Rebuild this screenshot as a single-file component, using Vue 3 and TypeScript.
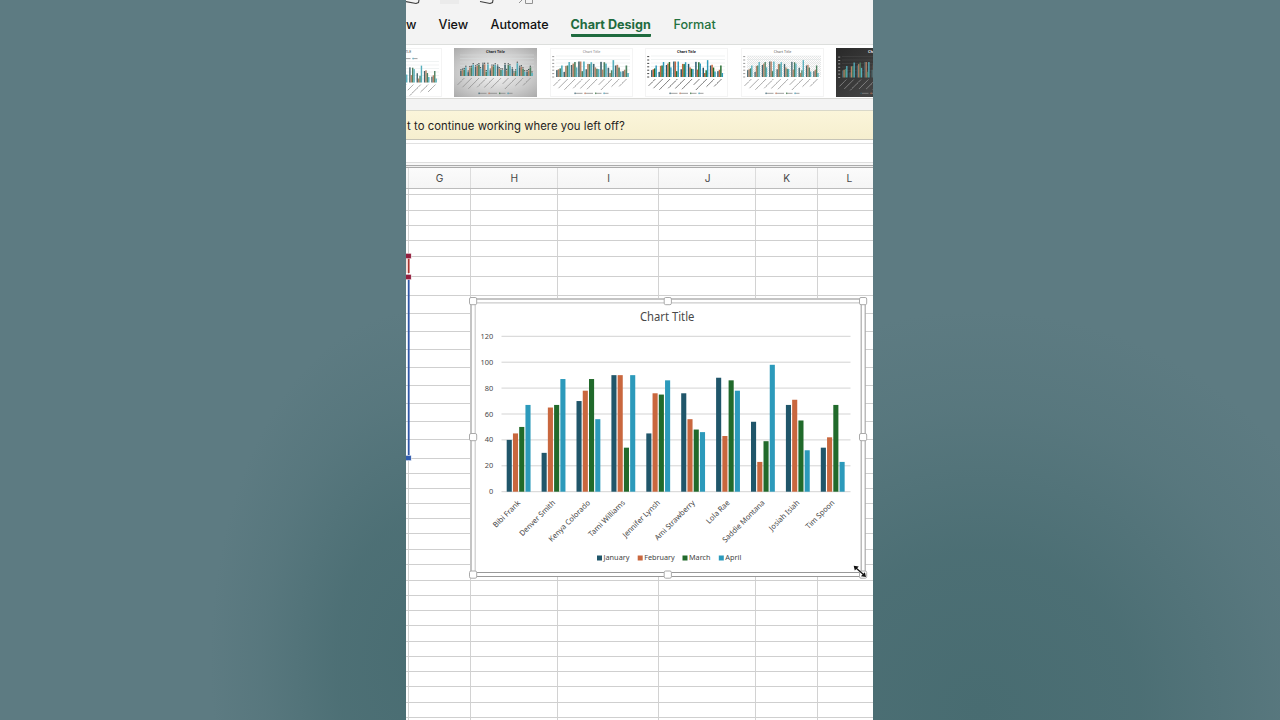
<script setup lang="ts">
interface Person { name: string; values: number[]; length: number }
interface Thumb { kind: string; title: string; base: number; titleColor: string; weight: number; bar: number; scale: number }

const people: Person[] = [
  { name: 'Bibi Frank', values: [40, 45, 50, 67], length: 35 },
  { name: 'Denver Smith', values: [30, 65, 67, 87], length: 47 },
  { name: 'Kenya Colorado', values: [70, 78, 87, 56], length: 55 },
  { name: 'Tami Williams', values: [90, 90, 34, 90], length: 48 },
  { name: 'Jennifer Lynsh', values: [45, 76, 75, 86], length: 49 },
  { name: 'Ami Strawberry', values: [76, 56, 48, 46], length: 53 },
  { name: 'Lola Rae', values: [88, 43, 86, 78], length: 29.5 },
  { name: 'Saddie Montana', values: [54, 23, 39, 98], length: 56 },
  { name: 'Josiah Isiah', values: [67, 71, 55, 32], length: 39.5 },
  { name: 'Tim Spoon', values: [34, 42, 67, 23], length: 37 },
]
const colors = ['#20566a', '#c9673e', '#216a2b', '#2c9abb']
const thumbColors = ['#43666e', '#b98468', '#4d8060', '#56afbd']
const ticks = [120, 100, 80, 60, 40, 20, 0]
const unit = 1.295
const baseline = 193.7
const barX = (person: number, series: number) => 36.7 + person * 34.9 + series * 6.25
const tickY = (tick: number) => baseline - tick * unit

const legend = [
  { label: 'January', x: 127, width: 26 },
  { label: 'February', x: 167.7, width: 30.5 },
  { label: 'March', x: 212.5, width: 21.5 },
  { label: 'April', x: 248.8, width: 16 },
]
const handles = [
  [3, 3], [197.7, 3], [393, 3], [3, 139], [393, 139], [3, 276.5], [197.7, 276.5], [393, 276.5],
]
const thumbs: Thumb[] = [
  { kind: 'caps', title: 'CHART TITLE', base: 34.5, titleColor: '#444', weight: 400, bar: 1.4, scale: .172 },
  { kind: 'silver', title: 'Chart Title', base: 28, titleColor: '#222', weight: 700, bar: 1.65, scale: .13 },
  { kind: 'plain', title: 'Chart Title', base: 29, titleColor: '#777', weight: 400, bar: 1.65, scale: .172 },
  { kind: 'bold', title: 'Chart Title', base: 29, titleColor: '#111', weight: 700, bar: 1.45, scale: .172 },
  { kind: 'hatched', title: 'Chart Title', base: 29, titleColor: '#555', weight: 400, bar: 1.35, scale: .172 },
  { kind: 'dark', title: 'Chart Title', base: 29.5, titleColor: '#eee', weight: 700, bar: 1.35, scale: .172 },
]
const thumbLegend = [
  { x: 24.5, width: 8 }, { x: 34.5, width: 8.5 }, { x: 45, width: 6.5 }, { x: 53.5, width: 5 },
]
const tabs = [
  { label: 'w', width: 9.5 },
  { label: 'View', width: 29 },
  { label: 'Automate', width: 57 },
  { label: 'Chart Design', width: 80 },
  { label: 'Format', width: 42 },
]
const columns = [
  { label: '', width: 2.5 },
  { label: 'G', width: 62 },
  { label: 'H', width: 87.5 },
  { label: 'I', width: 101.3 },
  { label: 'J', width: 96.5 },
  { label: 'K', width: 62 },
  { label: 'L', width: 63 },
]
const rowEnds = [195, 210.5, 225.5, 241, 256.5, 277.3, 295.7, 313.7, 331.7, 349.7, 367.7, 385.7, 403.7, 421.7,
  439.7, 458.5, 473.7, 488.7, 504, 519.3, 534.3, 549.7, 565, 580.5, 595.7, 611, 626.3, 641.5, 656.7, 672, 687.3, 702.7, 718.3, 733]
const rows = rowEnds.map((end, i) => Math.round(end) - Math.round(i ? rowEnds[i - 1] : 189))
</script>

<template>
  <main class="stage">
    <section class="window">
      <header class="ribbon">
        <svg class="toolbar" width="467" height="7" viewBox="0 0 467 7">
          <rect x="34" y="0" width="19" height="4" fill="#ebebeb" />
          <g fill="none" stroke="#3d3d3d" stroke-width="1.1">
            <path d="M-1 1.5 10 3.5 12.5 2.5 13 0" />
            <path d="M74 1.5 84 3.5 86.5 2.5 87 0" />
          </g>
          <g fill="none" stroke="#929292"><path d="M113 3 116 0M119.5 0V3.5H126.5V0" /></g>
        </svg>
        <nav class="tabs">
          <span v-for="tab in tabs" :key="tab.label" class="tab"
            :class="{ active: tab.label === 'Chart Design', green: tab.label === 'Format' }"
            :style="{ width: tab.width + 'px' }">{{ tab.label }}</span>
        </nav>
      </header>

      <div class="gallery">
        <svg v-for="thumb in thumbs" :key="thumb.kind" class="thumb" :class="thumb.kind" width="83" height="49" viewBox="0 0 83 49">
          <defs>
            <pattern id="hatch" width="2" height="2" patternUnits="userSpaceOnUse"><path d="M0 2 2 0" stroke="#cfcfcf" stroke-width=".5" /></pattern>
          </defs>
          <rect v-if="thumb.kind === 'hatched'" x="6" y="8" width="74" height="21" fill="url(#hatch)" />
          <g :stroke="thumb.kind === 'dark' ? '#505050' : '#d9e0e0'" stroke-width=".4">
            <path v-for="n in 6" :key="n" :d="`M6 ${thumb.base - n * 3.5}H80`" />
          </g>
          <text x="41.5" y="5.4" text-anchor="middle" font-size="3.6" :fill="thumb.titleColor" :font-weight="thumb.weight">{{ thumb.title }}</text>
          <g v-for="(person, i) in people" :key="person.name">
            <rect v-for="(value, s) in person.values" :key="s" :x="6.1 + i * 7.35 + s * thumb.bar" :y="thumb.base - value * thumb.scale"
              :width="thumb.bar" :height="value * thumb.scale" :fill="thumb.kind === 'bold' ? colors[s] : thumbColors[s]" />
            <template v-if="thumb.kind === 'silver'">
              <rect v-for="(value, s) in person.values" :key="'m' + s" :x="6.3 + i * 7.35 + s * thumb.bar" :y="thumb.base - value * thumb.scale - 1.6" width="1.2" height="1.1" fill="#3c4646" />
            </template>
            <path :d="`M${10.2 + i * 7.35} ${thumb.base + 2.2}l${-person.length / 5.2} ${person.length / 5.2}`"
              :stroke="thumb.kind === 'dark' ? '#999' : thumb.kind === 'bold' ? '#4a4a4a' : '#888'" stroke-width="1" stroke-dasharray="1 .3" />
          </g>
          <g v-if="['plain', 'bold', 'hatched', 'dark'].includes(thumb.kind)" :fill="thumb.kind === 'bold' ? '#444' : '#999'">
            <rect v-for="n in 7" :key="n" x="2.2" :y="thumb.base - (n - 1) * 3.4 - .5" width="2" height="1" />
          </g>
          <g opacity=".7">
            <template v-for="(item, n) in thumbLegend" :key="item.x">
              <rect :x="item.x" :y="thumb.kind === 'caps' ? 10 : 44.8" :width="item.width" height="1.1" fill="#888" />
              <rect :x="item.x" :y="thumb.kind === 'caps' ? 9.8 : 44.6" width="1.3" height="1.5" :fill="colors[n]" />
            </template>
          </g>
        </svg>
      </div>
      <div class="spacer"></div>
      <div class="notice">t to continue working where you left off?</div>
      <div class="formula"></div>

      <div class="sheet">
        <div class="columns">
          <div v-for="column in columns" :key="column.label" class="column-name" :style="{ width: column.width + 'px' }">{{ column.label }}</div>
        </div>
        <div class="body">
          <div v-for="(height, r) in rows" :key="r" class="row" :style="{ height: height + 'px' }">
            <div v-for="column in columns" :key="column.label" class="cell" :style="{ width: column.width + 'px' }"></div>
          </div>
        </div>
      </div>

      <svg class="range" width="8" height="212" viewBox="0 0 8 212">
        <rect x="0" y="6" width="4" height="15" fill="#f8e3df" />
        <path d="M2.7 6V21" stroke="#a93530" stroke-width="1.6" />
        <path d="M2.7 27V203" stroke="#3158a8" stroke-width="1.8" />
        <g stroke="#fff" stroke-width=".5">
          <rect x="-.3" y="1.3" width="5.5" height="5.4" fill="#94203f" />
          <rect x="-.3" y="22.3" width="5.5" height="5.4" fill="#94203f" />
          <rect x="-.3" y="203.3" width="5.5" height="5.4" fill="#315db0" />
        </g>
      </svg>

      <svg class="chart" width="403" height="286" viewBox="0 0 403 286">
        <rect x="1" y="1" width="394" height="277.5" fill="#fff" />
        <g fill="none">
          <path d="M1 279V1H395" stroke="#c4c4c4" stroke-width="2" />
          <path d="M5.2 274.5V4.8H391" stroke="#ccc" stroke-width="1.2" />
          <path d="M391.2 5V274.5M395.2 1V278.5" stroke="#ababab" stroke-width="1.2" />
          <path d="M5 274.5H391.5M1 278.5H395.5" stroke="#999" stroke-width="1.1" />
        </g>
        <text class="title" x="197.2" y="22.8" text-anchor="middle" textLength="54.5" lengthAdjust="spacingAndGlyphs">Chart Title</text>
        <g v-for="tick in ticks" :key="tick">
          <path :d="`M31.5 ${tickY(tick)}H380.5`" stroke="#d3d3d3" stroke-width="1" />
          <text class="tick" x="23.3" :y="tickY(tick) + 2.5" text-anchor="end">{{ tick }}</text>
        </g>
        <g v-for="(person, i) in people" :key="person.name">
          <rect v-for="(value, s) in person.values" :key="s" :x="barX(i, s)" :y="baseline - value * unit" width="5.1" :height="value * unit" :fill="colors[s]" />
          <text class="name" :transform="`translate(${50.8 + i * 34.9} 205.3) rotate(-45)`" text-anchor="end" :textLength="person.length" lengthAdjust="spacingAndGlyphs">{{ person.name }}</text>
        </g>
        <g v-for="(item, i) in legend" :key="item.label">
          <rect :x="item.x" y="257.5" width="5" height="5" :fill="colors[i]" />
          <text class="key" :x="item.x + 6.5" y="262.4" :textLength="item.width" lengthAdjust="spacingAndGlyphs">{{ item.label }}</text>
        </g>
        <rect v-for="(handle, i) in handles" :key="i" :x="handle[0] - 3.5" :y="handle[1] - 3.5" width="7.2" height="7.2" rx="1.5" fill="#fff" stroke="#aaa" stroke-width="1" />
        <g class="cursor">
          <path d="M386 270 394 277" fill="none" stroke="#111" stroke-width="1.2" />
          <path d="M383.7 267.7 388.8 268.6 384.8 272.6ZM396 279 390.9 278.2 394.9 274.2Z" fill="#111" />
        </g>
      </svg>
    </section>
  </main>
</template>

<style>
body { margin: 0; overflow: hidden; }
</style>

<style scoped>
* { box-sizing: border-box; }
.stage {
  width: 1280px; height: 720px; display: flex; justify-content: center; padding-right: 1px; overflow: hidden;
  background:
    radial-gradient(ellipse 210px 350px at 420px 660px, rgba(72,108,113,.95) 0%, rgba(72,108,113,.75) 40%, rgba(72,108,113,.25) 75%, rgba(72,108,113,0) 100%),
    radial-gradient(ellipse 400px 400px at 980px 710px, rgba(72,108,113,1) 0%, rgba(72,108,113,.8) 40%, rgba(72,108,113,.25) 75%, rgba(72,108,113,0) 100%),
    #5d7b82;
}
.window { position: relative; width: 467px; height: 720px; flex: none; display: flex; flex-direction: column; overflow: hidden; background: #fff; font-family: Inter, sans-serif; }
.ribbon { height: 45px; flex: none; background: #f3f3f3; border-bottom: 1px solid #dcdedc; }
.toolbar { display: block; }
.tabs { display: flex; gap: 23px; height: 31px; }
.tab { height: 30px; flex: none; white-space: nowrap; font-size: 12.6px; line-height: 35px; font-weight: 500; color: #111; }
.tab:first-child { text-align: right; }
.tab.active { color: #1f6b3f; font-weight: 700; border-bottom: 3px solid #1f6b3f; border-radius: 0 0 1px 1px; }
.tab.green { color: #24713f; }
.gallery { height: 54px; flex: none; display: flex; gap: 12.4px; margin-left: -47px; padding-top: 2.5px; background: #fff; border-bottom: 1.5px solid #d9d9d6; }
.thumb { flex: none; outline: 1px solid #f4f4f4; outline-offset: -1px; background: #fff; }
.silver { background: radial-gradient(ellipse at center, #f1f1f1 10%, #c9c9c9 65%, #aaa 100%); outline: none; }
.dark { background: linear-gradient(135deg, #292929, #434343 60%, #2b2b2b); outline: none; }
.spacer { height: 11px; flex: none; background: #f3f3f3; }
.notice { height: 30px; flex: none; padding-left: 1px; border-top: 1px solid #d9d8c9; border-bottom: 1px solid #c6c4b6; background: linear-gradient(#fbf5da, #f6efcf); color: #25231c; font-size: 11.3px; letter-spacing: .06px; line-height: 30px; white-space: nowrap; }
.formula { height: 25px; flex: none; margin: 3px 0 0; border-top: 1px solid #e1e1e1; background: linear-gradient(#fff 18px, #dedede 18px, #dedede 19px, #f8f8f8 19px, #f8f8f8 21px, #aaa 21px, #aaa 22px, #eee 22px, #eee 23px, #aaa 23px, #aaa 24px); }
.sheet { flex: 1; min-height: 0; overflow: hidden; }
.columns { display: flex; height: 21px; background: linear-gradient(#fbfbfb, #f5f5f5); border-bottom: 1px solid #bcbcbc; }
.column-name { flex: none; padding-left: 1px; text-align: center; border-right: 1px solid #dcdcdc; color: #484848; font-size: 10.2px; line-height: 21px; }
.column-name:first-child { padding: 0; }
.row { display: flex; border-bottom: 1px solid #cfcfcf; }
.cell { flex: none; border-right: 1px solid #d2d2d2; }
.range { position: absolute; left: 0; top: 252px; }
.chart { position: absolute; left: 64px; top: 298px; overflow: visible; font-family: "Noto Sans", sans-serif; }
.thumb text { font-family: "Noto Sans", sans-serif; }
.title { font-size: 12.3px; fill: #484848; }
.tick { font-size: 7.4px; fill: #484848; }
.name { font-size: 7.6px; fill: #484848; }
.key { font-size: 7.4px; fill: #454545; }
</style>
